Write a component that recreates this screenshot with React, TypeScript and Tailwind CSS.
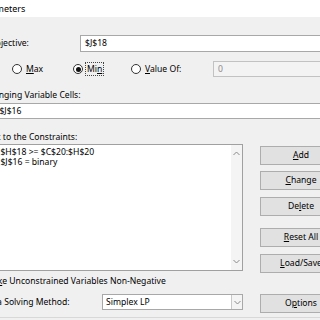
import type { ReactNode } from "react";

function Radio({ checked, label, focus }: { checked?: boolean; label: ReactNode; focus?: boolean }) {
  return (
    <div className="flex items-center gap-[2px]">
      <span className="flex h-[10px] w-[10px] items-center justify-center rounded-full border border-[#333] bg-white">
        {checked && <span className="h-[5px] w-[5px] rounded-full bg-[#111]" />}
      </span>
      <span className={focus ? "border border-dotted border-[#444] px-[1px] leading-[12px]" : "px-[2px]"}>{label}</span>
    </div>
  );
}

function Btn({ children, className = "" }: { children: ReactNode; className?: string }) {
  return (
    <div
      className={`flex h-[19px] w-[82px] items-center justify-center border border-[#adadad] bg-[#e1e1e1] ${className}`}
    >
      {children}
    </div>
  );
}

function Chevron({ up }: { up?: boolean }) {
  return (
    <svg width="7" height="5" viewBox="0 0 7 5" className={up ? "rotate-180" : ""}>
      <path d="M0.5 1 L3.5 4 L6.5 1" fill="none" stroke="#8a8a8a" strokeWidth="1" />
    </svg>
  );
}

export default function App() {
  return (
    <div className="h-[320px] w-[320px] overflow-hidden bg-[#f0f0f0] text-[8.6px] text-black [font-family:'Noto_Sans',sans-serif]">
      <div className="flex h-[17px] items-center bg-white text-[9px]">
        <span className="-ml-[52px] whitespace-nowrap">Solver Parameters</span>
      </div>

      <div className="-ml-[29px] w-[380px] whitespace-nowrap">
        {/* objective */}
        <div className="mt-[18px] flex h-[17px] items-center">
          <span className="w-[109px] pl-[3px]">
            Set Objective:
          </span>
          <div className="flex h-[17px] flex-1 items-center border border-[#a8a8a8] bg-white pl-[4px]">$J$18</div>
        </div>

        {/* to */}
        <div className="mt-[9px] flex h-[16px] items-center">
          <span className="w-[41px]">To:</span>
          <div className="w-[61px]">
            <Radio label={<><u>M</u>ax</>} />
          </div>
          <div className="w-[58px]">
            <Radio checked focus label={<>Mi<u>n</u></>} />
          </div>
          <div className="w-[82px]">
            <Radio label={<><u>V</u>alue Of:</>} />
          </div>
          <div className="flex h-[16px] flex-1 items-center border border-[#c2c2c2] bg-[#f3f3f3] pl-[4px] text-[#8c8c8c]">0</div>
        </div>

        {/* changing */}
        <div className="mt-[12px] flex h-[12px] items-center">
          <span>
            <u>B</u>y Changing Variable Cells:
          </span>
        </div>
        <div className="mt-[2px] flex h-[16px] items-center border border-[#a8a8a8] bg-white">$C$16:$J$16</div>

        {/* constraints */}
        <div className="mt-[12px] flex h-[12px] items-center">
          <span>
            Su<u>b</u>ject to the Constraints:
          </span>
        </div>
        <div className="mt-[1px] flex h-[127px] items-start gap-[17px]">
          <div className="flex h-[127px] w-[272px] border border-[#a0a0a0] bg-white">
            <div className="flex-1 pl-[1px] pt-[2px] leading-[10px]">
              <div>$C$18:$H$18 &gt;= $C$20:$H$20</div>
              <div>$C$16:$J$16 = binary</div>
            </div>
            <div className="flex w-[11px] flex-col items-center justify-between bg-[#f4f4f4] py-[6px]">
              <Chevron up />
              <Chevron />
            </div>
          </div>
          <div className="flex flex-col">
            <Btn className="mt-[2px]">
              <span><u>A</u>dd</span>
            </Btn>
            <Btn className="mt-[6px]">
              <span><u>C</u>hange</span>
            </Btn>
            <Btn className="mt-[7px]">
              <span>De<u>l</u>ete</span>
            </Btn>
            <Btn className="mt-[12px]">
              <span><u>R</u>eset All</span>
            </Btn>
            <Btn className="mt-[7px]">
              <span><u>L</u>oad/Save</span>
            </Btn>
          </div>
        </div>

        {/* checkbox */}
        <div className="mt-[4px] flex h-[12px] items-center">
          <span className="mr-[3px] h-[11px] w-[11px] border border-[#333] bg-white" />
          <span>
            Ma<u>k</u>e Unconstrained Variables Non-Negative
          </span>
        </div>

        {/* method */}
        <div className="mt-[7px] flex h-[19px] items-start gap-[17px]">
          <div className="flex w-[272px] items-start">
            <span className="mt-[2px] w-[131px]">
              S<u>e</u>lect a Solving Method:
            </span>
            <div className="flex h-[16px] flex-1 items-center border border-[#a8a8a8] bg-white pl-[3px]">
              <span className="flex-1">Simplex LP</span>
              <span className="flex h-[14px] w-[11px] items-center justify-center border-l border-[#c8c8c8] bg-[#f4f4f4]">
                <Chevron />
              </span>
            </div>
          </div>
          <Btn>
            <span>O<u>p</u>tions</span>
          </Btn>
        </div>
        <div className="mt-[4px] border-t border-[#d8d8d8]" />
      </div>
    </div>
  );
}
